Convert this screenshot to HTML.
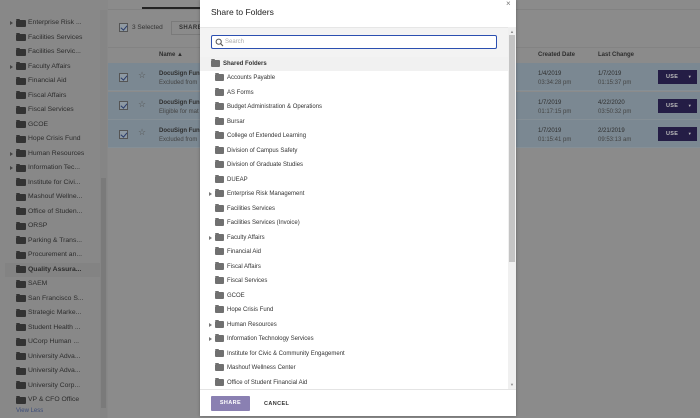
<!DOCTYPE html>
<html><head><meta charset="utf-8"><style>
*{box-sizing:border-box;margin:0;padding:0}
body{width:700px;height:418px;overflow:hidden;background:#8b8b8b;font-family:"Liberation Sans",sans-serif;position:relative;color:#2e2e2e}
.abs{position:absolute}
.fold{display:inline-block;width:10px;height:7px;background:#333;border-radius:1px;position:relative;vertical-align:middle;margin-top:-2px}
.fold:before{content:"";position:absolute;left:0;top:-1px;width:4px;height:1px;background:#333;border-radius:1px 1px 0 0}
.sb div{position:absolute;left:0;font-size:6.8px;color:#2c2c2c;white-space:nowrap;height:14.5px;line-height:14.5px;width:100px}
.sb .fold{position:absolute;left:16px;top:3.5px;margin:0}
.sb span.t{position:absolute;left:28px}
.arr{position:absolute;width:0;height:0;border-left:3px solid #444;border-top:2px solid transparent;border-bottom:2px solid transparent}
.row{position:absolute;left:108px;width:592px;height:28px;background:#7b8892;border-bottom:1px solid #858f96}
.cb{position:absolute;width:9px;height:9px;border:1px solid #555;background:#8d99a3}
.cb:after{content:"";position:absolute;left:2px;top:0px;width:2.5px;height:5px;border:solid #2a3b6a;border-width:0 1px 1px 0;transform:rotate(40deg)}
.use{position:absolute;left:658px;width:39px;height:14px;background:#241d45;color:#bbb;font-size:5.5px;font-weight:bold;line-height:14px;padding-left:8px;letter-spacing:.3px}
.use:after{content:"▼";position:absolute;right:5px;font-size:4px}
.m div.i{position:absolute;left:0;width:300px;height:14.5px;font-size:6px;color:#333;line-height:14.5px;white-space:nowrap}
.m .fold{position:absolute;left:15px;top:3px;margin:0;background:#707070;width:9px}
.m .fold:before{background:#707070}
.m .t{position:absolute;left:27px}
.m .arr{border-left-color:#777}
</style></head><body>
<div class="abs" style="left:0;top:0;width:108px;height:418px;background:#888"></div>
<div class="abs" style="left:100px;top:10px;width:7px;height:408px;background:#858585"></div>
<div class="abs" style="left:101px;top:178px;width:5px;height:230px;background:#7a7a7a"></div>
<div class="abs" style="left:5px;top:263px;width:95px;height:14px;background:#838383"></div>
<div class="sb abs" style="left:0;top:16px;width:100px;height:400px">
<div style="top:0"><i class="arr" style="left:10px;top:5px"></i><i class="fold"></i><span class="t">Enterprise Risk ...</span></div>
<div style="top:14.5px"><i class="fold"></i><span class="t">Facilities Services</span></div>
<div style="top:29px"><i class="fold"></i><span class="t">Facilities Servic...</span></div>
<div style="top:43.5px"><i class="arr" style="left:10px;top:5px"></i><i class="fold"></i><span class="t">Faculty Affairs</span></div>
<div style="top:58px"><i class="fold"></i><span class="t">Financial Aid</span></div>
<div style="top:72.5px"><i class="fold"></i><span class="t">Fiscal Affairs</span></div>
<div style="top:87px"><i class="fold"></i><span class="t">Fiscal Services</span></div>
<div style="top:101.5px"><i class="fold"></i><span class="t">GCOE</span></div>
<div style="top:116px"><i class="fold"></i><span class="t">Hope Crisis Fund</span></div>
<div style="top:130.5px"><i class="arr" style="left:10px;top:5px"></i><i class="fold"></i><span class="t">Human Resources</span></div>
<div style="top:145px"><i class="arr" style="left:10px;top:5px"></i><i class="fold"></i><span class="t">Information Tec...</span></div>
<div style="top:159.5px"><i class="fold"></i><span class="t">Institute for Civi...</span></div>
<div style="top:174px"><i class="fold"></i><span class="t">Mashouf Wellne...</span></div>
<div style="top:188.5px"><i class="fold"></i><span class="t">Office of Studen...</span></div>
<div style="top:203px"><i class="fold"></i><span class="t">ORSP</span></div>
<div style="top:217.5px"><i class="fold"></i><span class="t">Parking &amp; Trans...</span></div>
<div style="top:232px"><i class="fold"></i><span class="t">Procurement an...</span></div>
<div style="top:246.5px;font-weight:bold"><i class="fold"></i><span class="t">Quality Assura...</span></div>
<div style="top:261px"><i class="fold"></i><span class="t">SAEM</span></div>
<div style="top:275.5px"><i class="fold"></i><span class="t">San Francisco S...</span></div>
<div style="top:290px"><i class="fold"></i><span class="t">Strategic Marke...</span></div>
<div style="top:304.5px"><i class="fold"></i><span class="t">Student Health ...</span></div>
<div style="top:319px"><i class="fold"></i><span class="t">UCorp Human ...</span></div>
<div style="top:333.5px"><i class="fold"></i><span class="t">University Adva...</span></div>
<div style="top:348px"><i class="fold"></i><span class="t">University Adva...</span></div>
<div style="top:362.5px"><i class="fold"></i><span class="t">University Corp...</span></div>
<div style="top:377px"><i class="fold"></i><span class="t">VP &amp; CFO Office</span></div>
</div>
<div class="abs" style="left:16px;top:408px;font-size:6px;color:#3b4c7a">View Less</div>
<div class="abs" style="left:142px;top:7px;width:60px;height:2px;background:#222"></div>
<div class="abs" style="left:108px;top:9px;width:592px;height:1px;background:#828282"></div>
<div class="cb" style="left:119px;top:23px;background:#909aa2"></div>
<div class="abs" style="left:132px;top:24px;font-size:6.5px;color:#333">3 Selected</div>
<div class="abs" style="left:171px;top:21px;width:30px;height:14px;border:1px solid #7a7a7a;font-size:6px;font-weight:bold;line-height:12px;padding-left:7px;letter-spacing:.4px;color:#333">SHARE</div>
<div class="abs" style="left:108px;top:47px;width:592px;height:1px;background:#838383"></div>
<div class="abs" style="left:159px;top:52px;font-size:6px;font-weight:bold">Name ▲</div>
<div class="abs" style="left:538px;top:52px;font-size:6px;font-weight:bold">Created Date</div>
<div class="abs" style="left:598px;top:52px;font-size:6px;font-weight:bold">Last Change</div>
<div class="row" style="top:63px"></div><div class="row" style="top:92px"></div><div class="row" style="top:120px"></div>
<div class="cb" style="left:119px;top:73px"></div><div class="cb" style="left:119px;top:101px"></div><div class="cb" style="left:119px;top:130px"></div>
<div class="abs" style="left:138px;top:70px;font-size:9px;color:#555">☆</div>
<div class="abs" style="left:138px;top:99px;font-size:9px;color:#555">☆</div>
<div class="abs" style="left:138px;top:127px;font-size:9px;color:#555">☆</div>
<div class="abs" style="left:159px;top:70px;font-size:6px;line-height:9px"><b>DocuSign Fun</b><br><span style="color:#444">Excluded from</span></div>
<div class="abs" style="left:159px;top:99px;font-size:6px;line-height:9px"><b>DocuSign Fun</b><br><span style="color:#444">Eligible for mat</span></div>
<div class="abs" style="left:159px;top:127px;font-size:6px;line-height:9px"><b>DocuSign Fun</b><br><span style="color:#444">Excluded from</span></div>
<div class="abs" style="left:538px;top:70px;font-size:6px;line-height:9px">1/4/2019<br><span style="color:#444">03:34:28 pm</span></div>
<div class="abs" style="left:598px;top:70px;font-size:6px;line-height:9px">1/7/2019<br><span style="color:#444">01:15:37 pm</span></div>
<div class="abs" style="left:538px;top:99px;font-size:6px;line-height:9px">1/7/2019<br><span style="color:#444">01:17:15 pm</span></div>
<div class="abs" style="left:598px;top:99px;font-size:6px;line-height:9px">4/22/2020<br><span style="color:#444">03:50:32 pm</span></div>
<div class="abs" style="left:538px;top:127px;font-size:6px;line-height:9px">1/7/2019<br><span style="color:#444">01:15:41 pm</span></div>
<div class="abs" style="left:598px;top:127px;font-size:6px;line-height:9px">2/21/2019<br><span style="color:#444">09:53:13 am</span></div>
<div class="use" style="top:70px">USE</div><div class="use" style="top:99px">USE</div><div class="use" style="top:127px">USE</div>
<div class="abs" style="left:200px;top:0;width:316px;height:416px;background:#fff;box-shadow:0 0 3px rgba(0,0,0,.3)">
<div class="abs" style="left:11px;top:7px;font-size:8.5px;color:#222">Share to Folders</div>
<div class="abs" style="left:306px;top:-1px;font-size:8px;color:#777">×</div>
<div class="abs" style="left:0;top:27px;width:316px;height:30px;background:#f3f3f3;border-top:1px solid #e6e6e6"></div>
<div class="abs" style="left:11px;top:35px;width:286px;height:14px;border:1px solid #2b4fb0;border-radius:2px;background:#fff">
<svg class="abs" style="left:3px;top:2px" width="9" height="9" viewBox="0 0 9 9"><circle cx="3.7" cy="3.7" r="2.6" fill="none" stroke="#555" stroke-width="1"/><path d="M5.6 5.6L8 8" stroke="#555" stroke-width="1.1"/></svg>
<span class="abs" style="left:13px;top:3px;font-size:6px;color:#aaa">Search</span></div>
<div class="abs" style="left:0;top:57px;width:308px;height:14px;background:#f1f1f1"></div>
<div class="abs" style="left:308px;top:27px;width:8px;height:362px;background:#f0f0f0"></div>
<div class="abs" style="left:309px;top:35px;width:6px;height:227px;background:#c4c4c4"></div>
<div class="abs" style="left:310px;top:29px;font-size:4px;color:#888">▲</div>
<div class="abs" style="left:310px;top:382px;font-size:4px;color:#888">▼</div>
<div class="m abs" style="left:0;top:57px;width:308px;height:332px;overflow:hidden">
<div class="i" style="top:0;font-weight:bold"><i class="fold" style="left:11px"></i><span class="t" style="left:23px">Shared Folders</span></div>
<div class="i" style="top:14px"><i class="fold"></i><span class="t">Accounts Payable</span></div>
<div class="i" style="top:28.5px"><i class="fold"></i><span class="t">AS Forms</span></div>
<div class="i" style="top:43px"><i class="fold"></i><span class="t">Budget Administration &amp; Operations</span></div>
<div class="i" style="top:57.5px"><i class="fold"></i><span class="t">Bursar</span></div>
<div class="i" style="top:72px"><i class="fold"></i><span class="t">College of Extended Learning</span></div>
<div class="i" style="top:86.5px"><i class="fold"></i><span class="t">Division of Campus Safety</span></div>
<div class="i" style="top:101px"><i class="fold"></i><span class="t">Division of Graduate Studies</span></div>
<div class="i" style="top:115.5px"><i class="fold"></i><span class="t">DUEAP</span></div>
<div class="i" style="top:130px"><i class="arr" style="left:9px;top:5px"></i><i class="fold"></i><span class="t">Enterprise Risk Management</span></div>
<div class="i" style="top:144.5px"><i class="fold"></i><span class="t">Facilities Services</span></div>
<div class="i" style="top:159px"><i class="fold"></i><span class="t">Facilities Services (Invoice)</span></div>
<div class="i" style="top:173.5px"><i class="arr" style="left:9px;top:5px"></i><i class="fold"></i><span class="t">Faculty Affairs</span></div>
<div class="i" style="top:188px"><i class="fold"></i><span class="t">Financial Aid</span></div>
<div class="i" style="top:202.5px"><i class="fold"></i><span class="t">Fiscal Affairs</span></div>
<div class="i" style="top:217px"><i class="fold"></i><span class="t">Fiscal Services</span></div>
<div class="i" style="top:231.5px"><i class="fold"></i><span class="t">GCOE</span></div>
<div class="i" style="top:246px"><i class="fold"></i><span class="t">Hope Crisis Fund</span></div>
<div class="i" style="top:260.5px"><i class="arr" style="left:9px;top:5px"></i><i class="fold"></i><span class="t">Human Resources</span></div>
<div class="i" style="top:275px"><i class="arr" style="left:9px;top:5px"></i><i class="fold"></i><span class="t">Information Technology Services</span></div>
<div class="i" style="top:289.5px"><i class="fold"></i><span class="t">Institute for Civic &amp; Community Engagement</span></div>
<div class="i" style="top:304px"><i class="fold"></i><span class="t">Mashouf Wellness Center</span></div>
<div class="i" style="top:318.5px"><i class="fold"></i><span class="t">Office of Student Financial Aid</span></div>
</div>
<div class="abs" style="left:0;top:389px;width:316px;height:1px;background:#e4e4e4"></div>
<div class="abs" style="left:11px;top:396px;width:39px;height:15px;background:#8a80b2;border-radius:1px;color:#fff;font-size:5.5px;font-weight:bold;line-height:15px;text-align:center;letter-spacing:.4px">SHARE</div>
<div class="abs" style="left:64px;top:401px;font-size:5.5px;font-weight:bold;color:#333;letter-spacing:.4px">CANCEL</div>
</div>
</body></html>
